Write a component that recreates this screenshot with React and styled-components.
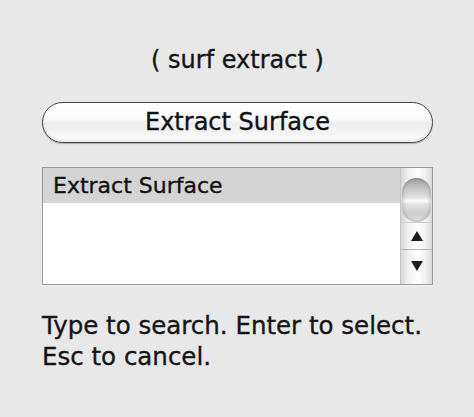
import React from "react";
import styled, { createGlobalStyle } from "styled-components";

const Global = createGlobalStyle`
  html, body {
    margin: 0;
    padding: 0;
    background: #e8e8e8;
  }
  body {
    font-family: "DejaVu Sans", "Liberation Sans", sans-serif;
    color: #111;
  }
`;

const Panel = styled.div`
  width: 474px;
  height: 417px;
  box-sizing: border-box;
  padding: 46px 41px 0 42px;
  display: flex;
  flex-direction: column;
  background: #e8e8e8;
  -webkit-text-stroke: 0.35px currentColor;
`;

const Title = styled.div`
  font-size: 24px;
  line-height: 28px;
  text-align: center;
  color: #151515;
`;

const PillButton = styled.button`
  margin-top: 28px;
  height: 41px;
  width: 100%;
  box-sizing: border-box;
  border: 1.5px solid #454545;
  border-radius: 21px;
  background: linear-gradient(
    to bottom,
    #ffffff 0%,
    #fbfbfb 40%,
    #eeeeee 52%,
    #f4f4f4 75%,
    #ffffff 100%
  );
  box-shadow: 0 1px 1px rgba(0, 0, 0, 0.25), inset 0 -2px 3px rgba(0, 0, 0, 0.08);
  font-family: "DejaVu Sans", "Liberation Sans", sans-serif;
  font-size: 24px;
  line-height: 28px;
  color: #111;
  -webkit-text-stroke: 0.35px #111;
  display: flex;
  align-items: center;
  justify-content: center;
  padding: 0 0 1px;
`;

const ListBox = styled.div`
  margin-top: 24px;
  height: 118px;
  box-sizing: border-box;
  border: 1px solid #9a9a9a;
  background: #ffffff;
  display: flex;
  box-shadow: 0 1px 0 #f4f4f4;
`;

const Rows = styled.div`
  flex: 1;
  display: flex;
  flex-direction: column;
`;

const Row = styled.div`
  height: 35px;
  padding-left: 10px;
  display: flex;
  align-items: center;
  font-size: 22px;
  line-height: 26px;
  color: #111;
  background: ${(p) => (p.$selected ? "#d4d4d4" : "transparent")};
`;

const Scrollbar = styled.div`
  width: 31px;
  border-left: 1px solid #c4c4c4;
  display: flex;
  flex-direction: column;
  background: linear-gradient(
    to right,
    #d6d6d6 0%,
    #f2f2f2 25%,
    #ffffff 55%,
    #f0f0f0 80%,
    #d9d9d9 100%
  );
`;

const Track = styled.div`
  height: 54px;
  box-sizing: border-box;
  padding: 10px 1px 0;
  display: flex;
  flex-direction: column;
`;

const Thumb = styled.div`
  height: 44px;
  border-radius: 15px;
  background: linear-gradient(
    to bottom,
    #9a9a9a 0%,
    #b8b8b8 15%,
    #d4d4d4 35%,
    #e6e6e6 46%,
    #fbfbfb 52%,
    #e2e2e2 60%,
    #cfcfcf 80%,
    #dcdcdc 100%
  );
  box-shadow: inset 2px 0 3px rgba(0, 0, 0, 0.12), inset -2px 0 3px rgba(0, 0, 0, 0.12);
`;

const ArrowButton = styled.div`
  height: ${(p) => p.$h}px;
  box-sizing: border-box;
  border-top: 1px solid ${(p) => (p.$dark ? "#b4b4b4" : "#d0d0d0")};
  display: flex;
  align-items: center;
  justify-content: center;
  padding-bottom: ${(p) => p.$pb || 0}px;
`;

const Help = styled.div`
  margin-top: 25px;
  font-size: 24.5px;
  line-height: 31px;
  color: #151515;
  white-space: nowrap;
`;

const Tri = ({ up }) => (
  <svg width="12" height="10" viewBox="0 0 12 10">
    {up ? (
      <polygon points="6,0 12,10 0,10" fill="#1e1e1e" />
    ) : (
      <polygon points="0,0 12,0 6,10" fill="#1e1e1e" />
    )}
  </svg>
);

export default function App() {
  return (
    <>
      <Global />
      <Panel>
        <Title>( surf extract )</Title>
        <PillButton>Extract Surface</PillButton>
        <ListBox>
          <Rows>
            <Row $selected>Extract Surface</Row>
          </Rows>
          <Scrollbar>
            <Track>
              <Thumb />
            </Track>
            <ArrowButton $h={27}>
              <Tri up />
            </ArrowButton>
            <ArrowButton $h={35} $dark $pb={3}>
              <Tri />
            </ArrowButton>
          </Scrollbar>
        </ListBox>
        <Help>
          Type to search. Enter to select.
          <br />
          Esc to cancel.
        </Help>
      </Panel>
    </>
  );
}
